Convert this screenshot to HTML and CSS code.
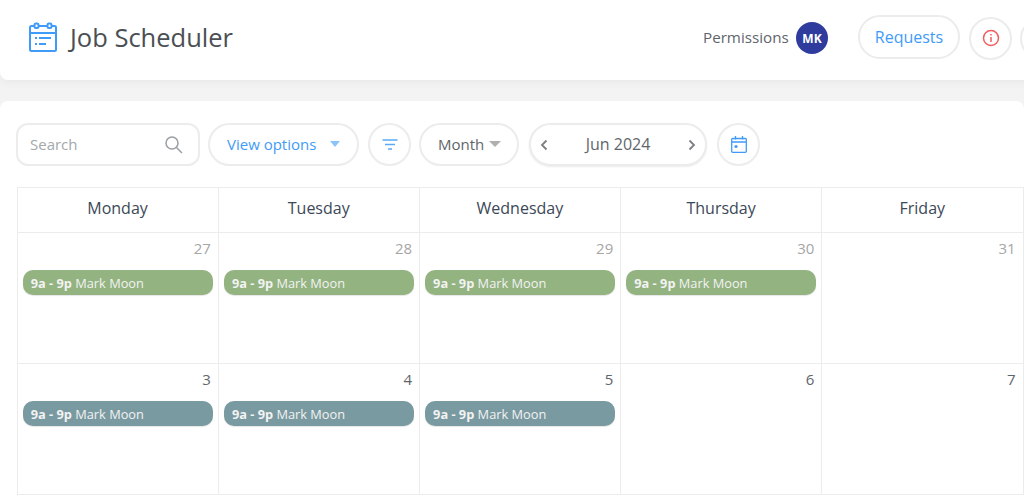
FILE: index.html
```html
<!DOCTYPE html>
<html lang="en">
<head>
    <meta charset="UTF-8">
    <meta name="viewport" content="width=device-width, initial-scale=1.0">
    <title>Job Scheduler</title>
    <link rel="stylesheet" href="styles.css">
</head>
<body>

    <!-- Top bar -->
    <header class="topbar">
        <svg class="title-icon" width="30" height="32" viewBox="0 0 30 32" fill="none" stroke="#3f9bf7" stroke-width="2">
            <rect x="2" y="4" width="26" height="25" rx="1.500"/>
            <path d="M2 11h26"/>
            <rect x="6.500" y="1.500" width="4" height="4.500" rx="1.500" fill="#fff"/>
            <rect x="19.500" y="1.500" width="4" height="4.500" rx="1.500" fill="#fff"/>
            <path d="M11 16h12M11 22h7"/>
            <path d="M7 16h2M7 22h2"/>
        </svg>
        <h1 class="title">Job Scheduler</h1>
        <span class="permissions">Permissions</span>
        <span class="avatar">MK</span>
        <button class="pill requests">Requests</button>
        <button class="round info-btn">
            <svg width="18" height="18" viewBox="0 0 18 18" fill="none" stroke="#f25c5c" stroke-width="1.500">
                <circle cx="9" cy="9" r="7.500"/>
                <path d="M9 8v5M9 5v1.500"/>
            </svg>
        </button>
        <button class="round"></button>
    </header>

    <!-- Calendar -->
    <main class="panel">
        <div class="toolbar">
            <div class="search">
                <span>Search</span>
                <svg width="20" height="20" viewBox="0 0 20 20" fill="none" stroke="#9a9fa3" stroke-width="1.500">
                    <circle cx="8" cy="8" r="6"/>
                    <path d="M12.500 12.500l5.500 5.500"/>
                </svg>
            </div>
            <button class="pill view-options">View options<i class="caret blue"></i></button>
            <button class="round filter-btn">
                <svg width="16" height="11" viewBox="0 0 16 11" fill="none" stroke="#5aaaf8" stroke-width="1.400">
                    <path d="M0.500 1h15M3 5.500h10M6 10h4"/>
                </svg>
            </button>
            <button class="pill month">Month<i class="caret"></i></button>
            <div class="pill date-nav">
                <svg width="8" height="12" viewBox="0 0 8 12" fill="none" stroke="#7a7f84" stroke-width="1.800"><path d="M6.500 1.500L2 6l4.500 4.500"/></svg>
                <span>Jun 2024</span>
                <svg width="8" height="12" viewBox="0 0 8 12" fill="none" stroke="#7a7f84" stroke-width="1.800"><path d="M1.500 1.500L6 6l-4.500 4.500"/></svg>
            </div>
            <button class="round">
                <svg width="16" height="17" viewBox="0 0 16 17" fill="none" stroke="#3f9bf7" stroke-width="1.300">
                    <rect x="0.700" y="2.500" width="14.600" height="13.800" rx="1"/>
                    <path d="M0.700 6h14.600M4.500 0v3.500M11.500 0v3.500"/>
                    <circle cx="5" cy="10.500" r="1.600" fill="#3f9bf7" stroke="none"/>
                </svg>
            </button>
        </div>

        <div class="calendar">
            <div class="day-head">Monday</div>
            <div class="day-head">Tuesday</div>
            <div class="day-head">Wednesday</div>
            <div class="day-head">Thursday</div>
            <div class="day-head">Friday</div>

            <div class="cell"><div class="num muted">27</div><div class="shift green"><b>9a - 9p</b> Mark Moon</div></div>
            <div class="cell"><div class="num muted">28</div><div class="shift green"><b>9a - 9p</b> Mark Moon</div></div>
            <div class="cell"><div class="num muted">29</div><div class="shift green"><b>9a - 9p</b> Mark Moon</div></div>
            <div class="cell"><div class="num muted">30</div><div class="shift green"><b>9a - 9p</b> Mark Moon</div></div>
            <div class="cell"><div class="num muted">31</div></div>

            <div class="cell"><div class="num">3</div><div class="shift teal"><b>9a - 9p</b> Mark Moon</div></div>
            <div class="cell"><div class="num">4</div><div class="shift teal"><b>9a - 9p</b> Mark Moon</div></div>
            <div class="cell"><div class="num">5</div><div class="shift teal"><b>9a - 9p</b> Mark Moon</div></div>
            <div class="cell"><div class="num">6</div></div>
            <div class="cell"><div class="num">7</div></div>
        </div>
    </main>

</body>
</html>
```

FILE: styles.css
```css
body {
    font-family: 'Open Sans', sans-serif;
    background-color: #f3f3f3;
    margin: 0;
    overflow: hidden;
    width: 1024px;
    height: 496px;
}
button {
    font-family: inherit;
    background: #fff;
    cursor: pointer;
    padding: 0;
}
.topbar {
    display: flex;
    align-items: center;
    width: 1070px;
    height: 80px;
    box-sizing: border-box;
    padding: 0 0 4px 28px;
    background-color: #fff;
    border-radius: 0 0 8px 8px;
    margin-bottom: 21px;
    box-shadow: 0 2px 8px rgba(0, 0, 0, 0.05);
}
.title-icon {
    flex: none;
    margin-right: 12px;
}
.title {
    margin: 0 0 2px 0;
    width: 633px;
    flex: none;
    font-size: 25.500px;
    font-weight: 400;
    color: #4a4f54;
}
.permissions {
    flex: none;
    width: 85px;
    font-size: 15.200px;
    white-space: nowrap;
    color: #5f666b;
    margin: 0 8px 2px 0;
}
.avatar {
    flex: none;
    width: 32px;
    height: 32px;
    border-radius: 50%;
    background-color: #2f3c9e;
    color: #fff;
    font-size: 12px;
    font-weight: 700;
    display: flex;
    align-items: center;
    justify-content: center;
    margin-right: 30px;
}
.pill {
    display: flex;
    align-items: center;
    flex: none;
    height: 44px;
    box-sizing: border-box;
    border: 2px solid #ececec;
    border-radius: 22px;
    background: #fff;
    font-size: 15px;
}
.round {
    flex: none;
    display: flex;
    align-items: center;
    justify-content: center;
    width: 43px;
    height: 43px;
    box-sizing: border-box;
    border: 2px solid #ececec;
    border-radius: 50%;
}
.requests {
    width: 102px;
    justify-content: center;
    color: #3f9bf7;
    font-size: 16px;
    margin: 0 9px 2px 0;
}
.info-btn {
    margin-right: 8px;
}
.panel {
    background-color: #fff;
    border-radius: 8px 8px 0 0;
    padding: 22px 0 0 16px;
    height: 395px;
    box-sizing: border-box;
}
.toolbar {
    display: flex;
    align-items: center;
    height: 43px;
    margin-bottom: 21px;
    line-height: 20px;
}
.toolbar .pill > span,
.search span {
    margin-top: -2px;
}
.search {
    display: flex;
    align-items: center;
    justify-content: space-between;
    box-sizing: border-box;
    width: 184px;
    height: 43px;
    padding: 0 14px 0 12px;
    border: 2px solid #ececec;
    border-radius: 12px;
    font-size: 15px;
    color: #a3a8ad;
    margin-right: 8px;
}
.view-options {
    width: 151px;
    height: 43px;
    padding: 0 0 2px 17px;
    color: #3f9bf7;
    margin-right: 9px;
}
.filter-btn {
    margin-right: 8px;
}
.month {
    width: 100px;
    height: 43px;
    padding: 0 0 2px 17px;
    color: #5f666b;
    margin-right: 10px;
}
.date-nav {
    width: 178px;
    height: 43px;
    padding: 0 9px;
    justify-content: space-between;
    color: #5f666b;
    font-size: 16px;
    margin-right: 10px;
    box-shadow: 0 1px 2px rgba(0, 0, 0, 0.08);
}
.caret {
    display: inline-block;
    width: 0;
    height: 0;
    margin-left: 5px;
    border-left: 6px solid transparent;
    border-right: 6px solid transparent;
    border-top: 6px solid #b0b0b0;
}
.caret.blue {
    margin-left: 14px;
    border-left-width: 5px;
    border-right-width: 5px;
    border-top: 6px solid #8cc4fa;
}
.calendar {
    display: grid;
    margin-left: 0.700px;
    grid-template-columns: repeat(5, 201.200px);
    grid-template-rows: 45px 131px 131px;
    border-top: 1px solid #ececec;
    border-left: 1px solid #ececec;
}
.day-head {
    display: flex;
    align-items: center;
    justify-content: center;
    padding: 0 0.500px 4px 0;
    border-right: 1px solid #ececec;
    border-bottom: 1px solid #ececec;
    font-size: 16px;
    color: #3c4858;
}
.cell {
    box-sizing: border-box;
    border-right: 1px solid #ececec;
    border-bottom: 1px solid #ececec;
    padding: 5px 5px 0 5px;
}
.num {
    text-align: right;
    font-size: 15px;
    line-height: 20px;
    color: #5f666b;
    margin-right: 2px;
    margin-bottom: 12px;
}
.num.muted {
    color: #a6a6a6;
}
.shift {
    height: 25px;
    width: 190px;
    box-sizing: border-box;
    border-radius: 10px;
    padding-left: 8px;
    font-size: 12.800px;
    line-height: 26px;
    color: #f2f2f2;
    white-space: nowrap;
    box-shadow: 0 1px 1px rgba(0, 0, 0, 0.1);
}
.shift b {
    font-weight: 700;
}
.green {
    background-color: #93b381;
}
.teal {
    background-color: #7a9aa1;
}
```
